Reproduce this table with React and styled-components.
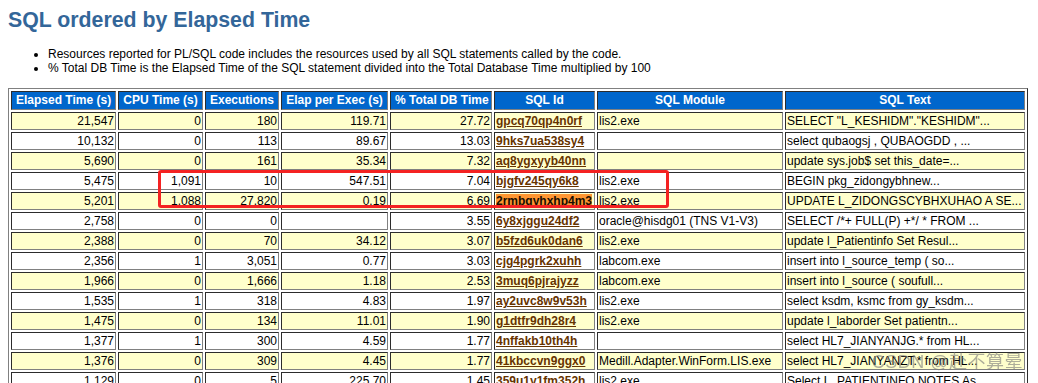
import React from 'react'
import styled, { createGlobalStyle } from 'styled-components'

const GlobalStyle = createGlobalStyle`
  html, body {
    margin: 0;
    padding: 0;
    overflow: hidden;
    background: #fff;
  }
  body {
    padding: 8px;
    font-family: "Liberation Sans", Arial, sans-serif;
  }
`

const columns = [
  { title: 'Elapsed Time (s)', width: 105 },
  { title: 'CPU Time (s)', width: 85 },
  { title: 'Executions', width: 74 },
  { title: 'Elap per Exec (s)', width: 107 },
  { title: '% Total DB Time', width: 102 },
  { title: 'SQL Id', width: 101 },
  { title: 'SQL Module', width: 186 },
  { title: 'SQL Text', width: 240 },
]

const rows = [
  ['21,547', '0', '180', '119.71', '27.72', 'gpcq70qp4n0rf', 'lis2.exe', 'SELECT "L_KESHIDM"."KESHIDM"...'],
  ['10,132', '0', '113', '89.67', '13.03', '9hks7ua538sy4', '', 'select qubaogsj , QUBAOGDD , ...'],
  ['5,690', '0', '161', '35.34', '7.32', 'aq8ygxyyb40nn', '', 'update sys.job$ set this_date=...'],
  ['5,475', '1,091', '10', '547.51', '7.04', 'bjgfv245qy6k8', 'lis2.exe', 'BEGIN pkg_zidongybhnew...'],
  ['5,201', '1,088', '27,820', '0.19', '6.69', '2rmbgyhxhp4m3', 'lis2.exe', 'UPDATE L_ZIDONGSCYBHXUHAO A SE...'],
  ['2,758', '0', '0', '', '3.55', '6y8xjggu24df2', 'oracle@hisdg01 (TNS V1-V3)', 'SELECT /*+ FULL(P) +*/ * FROM ...'],
  ['2,388', '0', '70', '34.12', '3.07', 'b5fzd6uk0dan6', 'lis2.exe', 'update l_Patientinfo Set Resul...'],
  ['2,356', '1', '3,051', '0.77', '3.03', 'cjg4pgrk2xuhh', 'labcom.exe', 'insert into l_source_temp ( so...'],
  ['1,966', '0', '1,666', '1.18', '2.53', '3muq6pjrajyzz', 'labcom.exe', 'insert into l_source ( soufull...'],
  ['1,535', '1', '318', '4.83', '1.97', 'ay2uvc8w9v53h', 'lis2.exe', 'select ksdm, ksmc from gy_ksdm...'],
  ['1,475', '0', '134', '11.01', '1.90', 'g1dtfr9dh28r4', 'lis2.exe', 'update l_laborder Set patientn...'],
  ['1,377', '1', '300', '4.59', '1.77', '4nffakb10th4h', '', 'select HL7_JIANYANJG.* from HL...'],
  ['1,376', '0', '309', '4.45', '1.77', '41kbccvn9ggx0', 'Medill.Adapter.WinForm.LIS.exe', 'select HL7_JIANYANZT.* from HL...'],
  ['1,129', '0', '5', '225.70', '1.45', '359u1y1fm352h', 'lis2.exe', 'Select L_PATIENTINFO.NOTES As...'],
]

const Title = styled.h2`
  margin: 1px 0 0;
  font: bold 21.3px/23px "Liberation Sans", Arial, sans-serif;
  color: #336699;
`

const Notes = styled.ul`
  margin: 15px 0 13px;
  padding-left: 40px;
  font-size: 12px;
  line-height: 14px;
  color: #000;
`

const Report = styled.div`
  position: relative;
`

const Table = styled.table`
  box-sizing: border-box;
  width: 1020px;
  table-layout: fixed;
  border: 1px outset grey;
  border-spacing: 2px;
  font-size: 12px;
`

const Head = styled.th`
  box-sizing: border-box;
  width: ${(p) => p.$w}px;
  padding: 1px 4px 2px;
  line-height: 14px;
  border: 1px inset grey;
  background: #0066cc;
  color: #fff;
  font-weight: bold;
  text-align: center;
  white-space: nowrap;
  overflow: hidden;
`

const Cell = styled.td`
  box-sizing: border-box;
  padding: 1px;
  line-height: 14px;
  border: 1px inset grey;
  background: ${(p) => (p.$shade ? '#ffffcc' : '#fff')};
  color: #000;
  text-align: ${(p) => (p.$num ? 'right' : 'left')};
  white-space: nowrap;
  overflow: hidden;
  vertical-align: top;
`

const SqlLink = styled.a`
  font-weight: bold;
  color: ${(p) => (p.$found ? '#1a0d00' : '#663300')};
  background: ${(p) => (p.$found ? '#ff9632' : 'transparent')};
  text-decoration: underline;
`

const Marker = styled.div`
  position: absolute;
  left: 150px;
  top: 82px;
  width: 511px;
  height: 38px;
  box-sizing: border-box;
  border: 3px solid #f42222;
  border-radius: 3px;
  pointer-events: none;
`

const Watermark = styled.div`
  position: fixed;
  right: 15px;
  bottom: 10px;
  font: 18px "Liberation Sans", "Noto Sans CJK SC", sans-serif;
  color: rgba(120, 120, 120, 0.6);
  letter-spacing: 0.5px;
`

export default function App() {
  return (
    <>
      <GlobalStyle />
      <Title>SQL ordered by Elapsed Time</Title>
      <Notes>
        <li>Resources reported for PL/SQL code includes the resources used by all SQL statements called by the code.</li>
        <li>% Total DB Time is the Elapsed Time of the SQL statement divided into the Total Database Time multiplied by 100</li>
      </Notes>
      <Report>
        <Table>
          <thead>
            <tr>
              {columns.map((c) => (
                <Head key={c.title} $w={c.width}>{c.title}</Head>
              ))}
            </tr>
          </thead>
          <tbody>
            {rows.map((r, i) => {
              const shade = i % 2 === 0
              return (
                <tr key={r[5]}>
                  {r.slice(0, 5).map((v, j) => (
                    <Cell key={j} $num $shade={shade}>{v}</Cell>
                  ))}
                  <Cell $shade={shade}>
                    <SqlLink href="#" $found={r[5] === '2rmbgyhxhp4m3'}>{r[5]}</SqlLink>
                  </Cell>
                  <Cell $shade={shade}>{r[6]}</Cell>
                  <Cell $shade={shade}>{r[7]}</Cell>
                </tr>
              )
            })}
          </tbody>
        </Table>
        <Marker />
      </Report>
      <Watermark>CSDN @赴不算晕</Watermark>
    </>
  )
}
